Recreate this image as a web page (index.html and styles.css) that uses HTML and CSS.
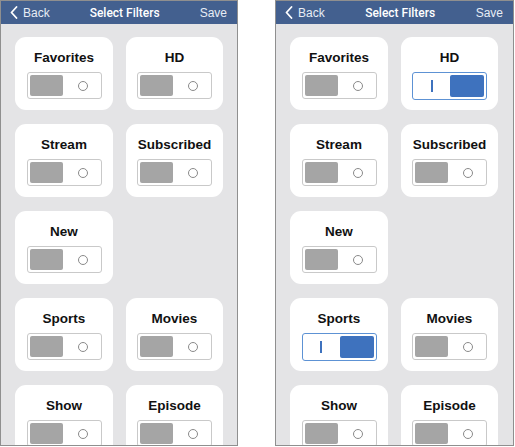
FILE: index.html
```html
<!DOCTYPE html>
<html>
<head>
<meta charset="utf-8">
<link rel="stylesheet" href="styles.css">
</head>
<body>
<div class="screens">
  <div class="phone">
    <div class="nav">
      <span class="back"><svg class="chev" width="8" height="13" viewBox="0 0 8 13"><polyline points="6.5,1 1.5,6.5 6.5,12" fill="none" stroke="#fff" stroke-width="1.8" stroke-linecap="round" stroke-linejoin="round"/></svg>Back</span>
      <span class="title">Select Filters</span>
      <span class="save">Save</span>
    </div>
    <div class="grid">
      <div class="card"><div class="label">Favorites</div><div class="toggle"><span class="knob"></span><span class="off"><span class="ring"></span></span></div></div>
      <div class="card"><div class="label">HD</div><div class="toggle"><span class="knob"></span><span class="off"><span class="ring"></span></span></div></div>
      <div class="card"><div class="label">Stream</div><div class="toggle"><span class="knob"></span><span class="off"><span class="ring"></span></span></div></div>
      <div class="card"><div class="label">Subscribed</div><div class="toggle"><span class="knob"></span><span class="off"><span class="ring"></span></span></div></div>
      <div class="card"><div class="label">New</div><div class="toggle"><span class="knob"></span><span class="off"><span class="ring"></span></span></div></div>
      <div class="empty"></div>
      <div class="card"><div class="label">Sports</div><div class="toggle"><span class="knob"></span><span class="off"><span class="ring"></span></span></div></div>
      <div class="card"><div class="label">Movies</div><div class="toggle"><span class="knob"></span><span class="off"><span class="ring"></span></span></div></div>
      <div class="card"><div class="label">Show</div><div class="toggle"><span class="knob"></span><span class="off"><span class="ring"></span></span></div></div>
      <div class="card"><div class="label">Episode</div><div class="toggle"><span class="knob"></span><span class="off"><span class="ring"></span></span></div></div>
    </div>
  </div>
  <div class="phone">
    <div class="nav">
      <span class="back"><svg class="chev" width="8" height="13" viewBox="0 0 8 13"><polyline points="6.5,1 1.5,6.5 6.5,12" fill="none" stroke="#fff" stroke-width="1.8" stroke-linecap="round" stroke-linejoin="round"/></svg>Back</span>
      <span class="title">Select Filters</span>
      <span class="save">Save</span>
    </div>
    <div class="grid">
      <div class="card"><div class="label">Favorites</div><div class="toggle"><span class="knob"></span><span class="off"><span class="ring"></span></span></div></div>
      <div class="card"><div class="label">HD</div><div class="toggle on"><span class="onside"><span class="bar"></span></span><span class="knob"></span></div></div>
      <div class="card"><div class="label">Stream</div><div class="toggle"><span class="knob"></span><span class="off"><span class="ring"></span></span></div></div>
      <div class="card"><div class="label">Subscribed</div><div class="toggle"><span class="knob"></span><span class="off"><span class="ring"></span></span></div></div>
      <div class="card"><div class="label">New</div><div class="toggle"><span class="knob"></span><span class="off"><span class="ring"></span></span></div></div>
      <div class="empty"></div>
      <div class="card"><div class="label">Sports</div><div class="toggle on"><span class="onside"><span class="bar"></span></span><span class="knob"></span></div></div>
      <div class="card"><div class="label">Movies</div><div class="toggle"><span class="knob"></span><span class="off"><span class="ring"></span></span></div></div>
      <div class="card"><div class="label">Show</div><div class="toggle"><span class="knob"></span><span class="off"><span class="ring"></span></span></div></div>
      <div class="card"><div class="label">Episode</div><div class="toggle"><span class="knob"></span><span class="off"><span class="ring"></span></span></div></div>
    </div>
  </div>
</div>
</body>
</html>
```
FILE: styles.css
```css
html, body {
  margin: 0;
  padding: 0;
  background: #ffffff;
  font-family: "Liberation Sans", Arial, sans-serif;
}
.screens {
  display: flex;
  gap: 37px;
  width: 515px;
  height: 447px;
  overflow: hidden;
}
.phone {
  width: 236px;
  height: 444px;
  border: 1px solid #8f8f8f;
  background: #e4e4e6;
  display: flex;
  flex-direction: column;
  overflow: hidden;
}
.phone + .phone {
  width: 237px;
}
.nav {
  height: 23px;
  background: #43608f;
  color: #ffffff;
  font-size: 12px;
  display: flex;
  align-items: center;
  justify-content: space-between;
  padding: 0 10px 0 9px;
  flex-shrink: 0;
}
.back {
  display: flex;
  align-items: center;
  gap: 5px;
  color: #e8edf5;
}
.chev {
  display: block;
}
.title {
  font-family: Roboto, "Liberation Sans", sans-serif;
  font-weight: 500;
  font-size: 12px;
}
.save {
  color: #e8edf5;
}
.grid {
  display: grid;
  grid-template-columns: 98px 97px;
  grid-auto-rows: 73px;
  column-gap: 13px;
  row-gap: 14px;
  padding: 13px 0 0 14px;
}
.card {
  background: #ffffff;
  border-radius: 11px;
  display: flex;
  flex-direction: column;
  align-items: center;
  padding-top: 12px;
  box-sizing: border-box;
}
.label {
  font-size: 13.5px;
  font-weight: bold;
  color: #111111;
  line-height: 18px;
  height: 18px;
  margin-bottom: 5px;
}
.toggle {
  width: 75px;
  height: 27px;
  box-sizing: border-box;
  border: 1px solid #c9c9c9;
  border-radius: 3px;
  background: #ffffff;
  padding: 2px;
  display: flex;
}
.knob {
  width: 33px;
  height: 100%;
  background: #a5a5a5;
  border-radius: 2px;
}
.off {
  flex: 1;
  display: flex;
  align-items: center;
  justify-content: center;
  padding-left: 4px;
}
.ring {
  width: 8px;
  height: 8px;
  border: 1px solid #8a8a8a;
  border-radius: 50%;
}
.toggle.on {
  border-color: #5d92d4;
  height: 28px;
}
.toggle.on .knob {
  background: #3e72be;
  width: 34px;
}
.onside {
  flex: 1;
  display: flex;
  align-items: center;
  justify-content: center;
  padding-right: 2px;
}
.bar {
  width: 2px;
  height: 12px;
  background: #3e72be;
}
```
